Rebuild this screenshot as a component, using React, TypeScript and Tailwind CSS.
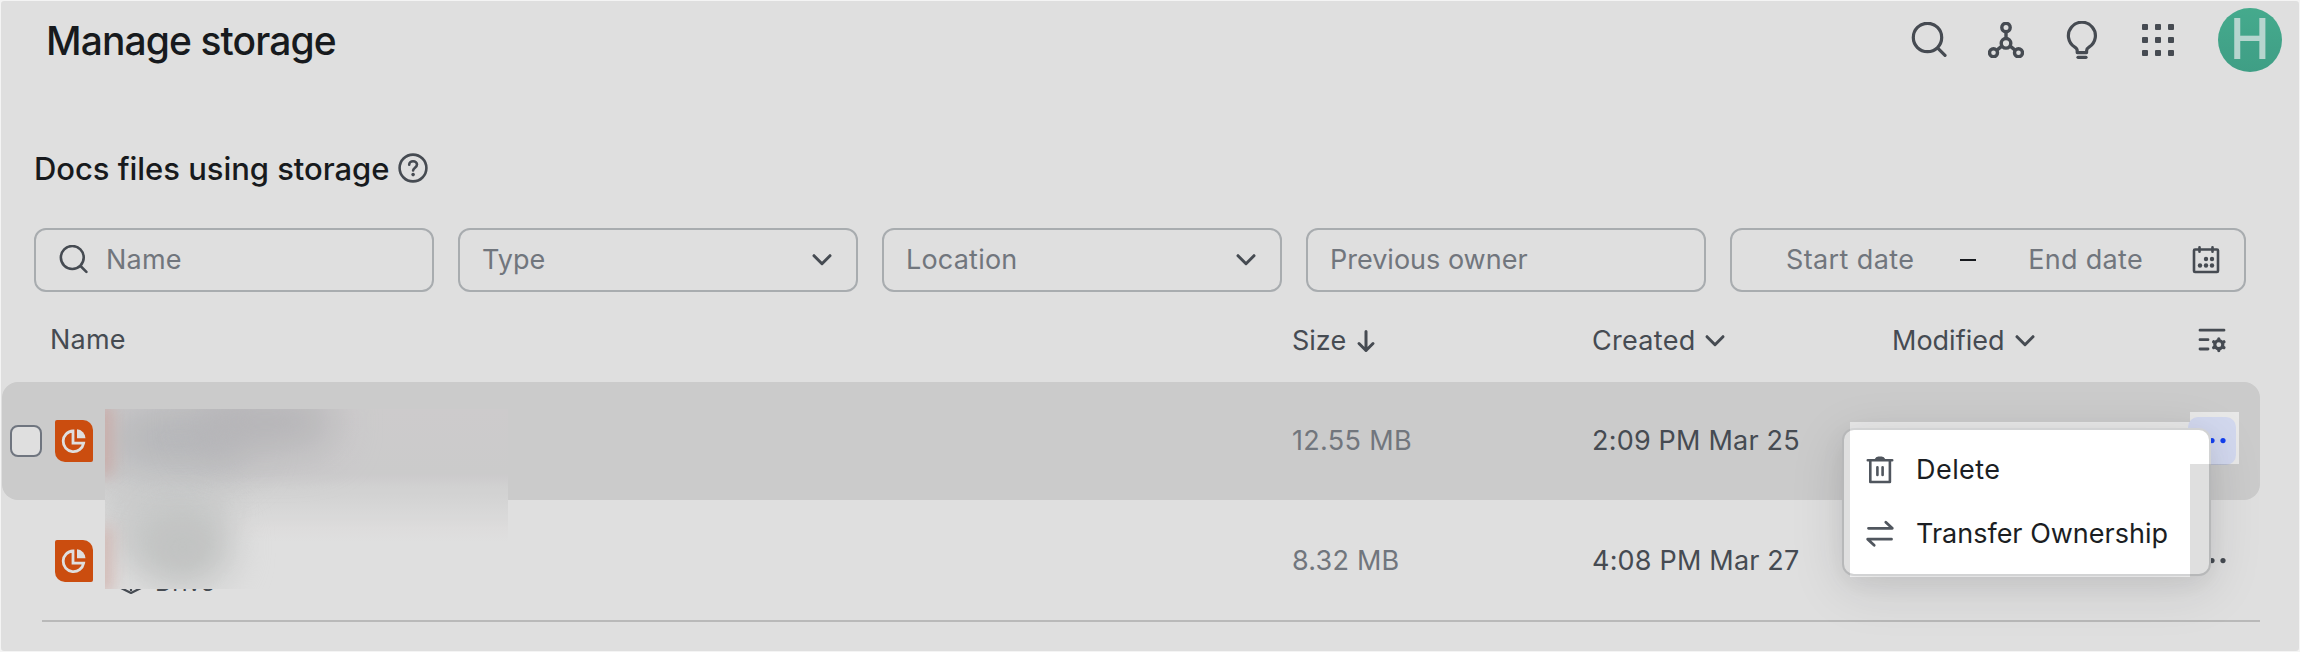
import type { ReactNode } from 'react';

type IconProps = { className?: string };

const SearchIcon = ({ className }: IconProps) => (
  <svg viewBox="0 0 36 36" className={className} fill="none" stroke="currentColor" strokeWidth="3.2" strokeLinecap="round">
    <circle cx="16.5" cy="15.5" r="14.2" />
    <path d="M27 26.4l7 7" />
  </svg>
);

const NetworkIcon = () => (
  <svg viewBox="0 0 36 36" className="size-9" fill="none" stroke="currentColor" strokeWidth="3.4">
    <circle cx="18" cy="5.5" r="4.2" />
    <circle cx="18" cy="21.3" r="4.8" />
    <circle cx="5.5" cy="30.7" r="4" />
    <circle cx="30.5" cy="30.7" r="4" />
    <path d="M18 10v6M13.8 24.2l-4.6 3.6M22.2 24.2l4.6 3.6" />
  </svg>
);

const BulbIcon = () => (
  <svg viewBox="0 0 36 38" className="h-[38px] w-9" fill="none" stroke="currentColor" strokeWidth="3.2" strokeLinecap="round" strokeLinejoin="round">
    <path d="M13.2 31.6v-1.8c0-1.6-.9-2.7-2.4-3.6a13.5 13.5 0 1 1 14.2 0c-1.5.9-2.4 2-2.4 3.6v1.8z" />
    <path d="M14 36.3h8" />
  </svg>
);

const AppsIcon = () => (
  <svg viewBox="0 0 36 36" className="size-9" fill="currentColor">
    {[2, 15, 28].map((y) => [2, 15, 28].map((x) => <rect key={`${x}-${y}`} x={x} y={y} width="6" height="6" rx="1" />))}
  </svg>
);

const HelpIcon = () => (
  <svg viewBox="0 0 30 30" className="size-[30px]" fill="none" stroke="currentColor" strokeWidth="2.6" strokeLinecap="round">
    <circle cx="15" cy="15" r="13.4" />
    <path d="M11.2 11.8c0-2.3 1.7-3.6 3.9-3.6s3.9 1.4 3.9 3.4c0 3-3.9 3.2-3.9 5.9" />
    <circle cx="15.1" cy="21.6" r="1.8" fill="currentColor" stroke="none" />
  </svg>
);

const ChevronIcon = () => (
  <svg viewBox="0 0 24 24" className="size-6 shrink-0" fill="none" stroke="currentColor" strokeWidth="3" strokeLinecap="round" strokeLinejoin="round">
    <path d="M4 7.7l8 8 8-8" />
  </svg>
);

const ArrowDownIcon = () => (
  <svg viewBox="0 0 24 24" className="size-6" fill="none" stroke="currentColor" strokeWidth="3" strokeLinecap="round" strokeLinejoin="round">
    <path d="M12 2.5v19M5 14.5l7 7 7-7" />
  </svg>
);

const CalendarIcon = () => (
  <svg viewBox="0 0 28 28" className="size-7" fill="none" stroke="currentColor" strokeWidth="2.6" strokeLinejoin="round">
    <rect x="2" y="3.5" width="24" height="22.5" rx="1" />
    <path d="M7.5 1.3v4.4M20.5 1.3v4.4" strokeLinecap="round" />
    <g fill="currentColor" stroke="none">
      <circle cx="14" cy="13" r="2.2" />
      <circle cx="20" cy="13" r="2.2" />
      <circle cx="8" cy="19.5" r="2.2" />
      <circle cx="14" cy="19.5" r="2.2" />
      <circle cx="20" cy="19.5" r="2.2" />
    </g>
  </svg>
);

const ColumnSettingsIcon = () => (
  <svg viewBox="0 0 28 28" className="size-7" fill="none" stroke="currentColor" strokeWidth="2.8" strokeLinecap="round">
    <path d="M2 3.2h24M2 12.7h8M2 22h8" />
    <circle cx="20.8" cy="17.7" r="4" strokeWidth="3.2" />
    <path d="M20.8 11.8v1M20.8 22.6v1M15.7 14.8l.8.5M25.1 20.1l.8.5M15.7 20.6l.8-.5M25.1 15.3l.8-.5" strokeWidth="3.2" />
  </svg>
);

const TrashIcon = () => (
  <svg viewBox="0 0 28 28" className="size-7" fill="none" stroke="currentColor" strokeWidth="2.6" strokeLinecap="round" strokeLinejoin="round">
    <path d="M1.8 4.2h24.4M4.3 4.2V26h19.6V4.2" />
    <path d="M9.5 3.4c.6-1.5 1.5-2.1 2.8-2.1h3.4c1.3 0 2.2.6 2.8 2.1z" fill="currentColor" strokeWidth="1.5" />
    <path d="M11.4 11.2V19M16.6 11.2V19" />
  </svg>
);

const TransferIcon = () => (
  <svg viewBox="0 0 28 28" className="size-7" fill="none" stroke="currentColor" strokeWidth="2.8" strokeLinecap="round" strokeLinejoin="round">
    <path d="M2.5 8.3h23.8l-6.5-6.1M25.5 19.2H1.7l6.5 6.1" />
  </svg>
);

const SlidesIcon = () => (
  <svg viewBox="0 0 38 42" className="h-[42px] w-[38px] rounded-[2px_10px_2px_10px] bg-[#e85812]">
    <path d="M18 11v12.2h10.6A10.3 10.3 0 1 1 18 11z" fill="none" stroke="white" strokeWidth="2.8" />
    <path d="M22 9.3a9.2 9.2 0 0 1 8.5 9H22z" fill="white" />
  </svg>
);

const DriveIcon = () => (
  <svg viewBox="0 0 24 24" className="size-6" fill="none" stroke="currentColor" strokeWidth="2.2" strokeLinejoin="round">
    <path d="M12 2l10 5.500v9.500l-10 5-10-5V7.500zM12 12v8M2 7.500l10 4.500 10-4.500" />
  </svg>
);

const Dots = () => (
  <svg viewBox="0 0 48 48" className="size-12" fill="currentColor">
    <circle cx="13" cy="23.6" r="2.6" />
    <circle cx="24" cy="23.6" r="2.6" />
    <circle cx="35" cy="23.6" r="2.6" />
  </svg>
);

const Field = ({ className = '', children }: { className?: string; children: ReactNode }) => (
  <div className={`flex h-16 items-center rounded-xl border-2 border-[#c1c5c9] text-[27px] text-[#82878f] ${className}`}>{children}</div>
);

const MoreButton = ({ active }: { active?: boolean }) => (
  <button className={`ml-auto rounded-[10px] ${active ? 'bg-[#d2d8ee] text-[#1440f0]' : 'text-[#50565e]'}`}>
    <Dots />
  </button>
);

const rowGrid = 'grid grid-cols-[1290px_300px_300px_1fr] items-center';

export default function App() {
  return (
    <div className="h-[652px] w-[2300px] bg-[#f4f4f4] p-px font-['Inter',sans-serif]">
      <div className="relative h-full overflow-hidden rounded-[3px] bg-white text-[#50565e]">
        {/* top bar */}
        <header className="flex h-[78px] items-center pl-[45px] pr-[17px]">
          <h1 className="text-[39px] font-medium leading-none tracking-[-0.9px] text-[#1b1e23]">Manage storage</h1>
          <div className="ml-auto flex items-center gap-10">
            <SearchIcon className="mr-px size-9" />
            <NetworkIcon />
            <BulbIcon />
            <AppsIcon />
            <div className="ml-[2px] flex size-16 items-center justify-center rounded-full bg-linear-to-b from-[#4fc3a1] to-[#49b599] pb-[3px]">
              <span className="scale-x-95 text-[56px] font-medium leading-none text-[#d0f4ec]">H</span>
            </div>
          </div>
        </header>

        <section className="mt-[74px] pl-[33px] pr-[53px]">
          <div className="flex h-8 items-center gap-[9px]">
            <h2 className="text-[31px] font-medium leading-8 tracking-[-0.04px] text-[#1b1e23]">Docs files using storage</h2>
            <span className="-mt-[2px]">
              <HelpIcon />
            </span>
          </div>

          {/* filters */}
          <div className="mt-[43px] flex gap-6">
            <Field className="w-[400px] gap-[18px] pl-[23px]">
              <SearchIcon className="-mt-px size-[29px] text-[#50565e]" />
              <span className="tracking-[0.2px]">Name</span>
            </Field>
            <Field className="w-[400px] justify-between px-[22px]">
              <span>Type</span>
              <span className="text-[#50565e]">
                <ChevronIcon />
              </span>
            </Field>
            <Field className="w-[400px] justify-between px-[22px]">
              <span className="tracking-[0.2px]">Location</span>
              <span className="text-[#50565e]">
                <ChevronIcon />
              </span>
            </Field>
            <Field className="w-[400px] px-[22px]">
              <span>Previous owner</span>
            </Field>
            <Field className="flex-1 pl-[54px] pr-6">
              <span className="tracking-[0.38px]">Start date</span>
              <span className="ml-[46px] h-[2px] w-4 bg-[#1b1e23]" />
              <span className="ml-[52px] tracking-[0.3px]">End date</span>
              <span className="ml-auto text-[#50565e]">
                <CalendarIcon />
              </span>
            </Field>
          </div>
        </section>

        <section className="relative ml-px mr-[39px] text-[27px]">
          <div className={`${rowGrid} h-[90px] pt-2`}>
            <div className="-mt-0.5 pl-12 tracking-[0.2px]">Name</div>
            <div className="flex items-center gap-2">
              Size <ArrowDownIcon />
            </div>
            <div className="flex items-center gap-[7px] tracking-[0.3px]">
              Created <ChevronIcon />
            </div>
            <div className="flex items-center gap-[9px] pr-5">
              Modified <ChevronIcon />
              <span className="ml-auto pr-[14px]">
                <ColumnSettingsIcon />
              </span>
            </div>
          </div>

          <div className={`${rowGrid} h-[118px] rounded-2xl bg-[#e8e8e8]`}>
            <div className="flex items-center pl-2">
              <span className="size-8 rounded-lg border-2 border-[#7f8692] bg-white" />
              <span className="ml-[13px]">
                <SlidesIcon />
              </span>
            </div>
            <div className="tracking-[0.33px] text-[#82878f]">12.55 MB</div>
            <div className="tracking-[0.2px]">2:09 PM Mar 25</div>
            <div className="flex pr-6">
              <MoreButton active />
            </div>
          </div>

          <div className={`${rowGrid} mt-0.5 h-[118px]`}>
            <div className="flex h-full items-center pl-[53px]">
              <SlidesIcon />
              <div className="mb-[22px] ml-[26px] flex h-[30px] items-center gap-3 self-end text-2xl">
                <DriveIcon />
                <span>Drive</span>
              </div>
            </div>
            <div className="tracking-[0.2px] text-[#82878f]">8.32 MB</div>
            <div className="tracking-[0.19px]">4:08 PM Mar 27</div>
            <div className="flex pr-6">
              <MoreButton />
            </div>
          </div>
          <div className="ml-10 h-[2px] bg-[#d4d4d4]" />

          {/* redacted file names */}
          <div className="absolute left-[103px] top-[117px] h-[180px] w-[403px] overflow-hidden bg-[linear-gradient(to_bottom,#ebe9ea_0%,#e9e8e9_36%,#efefef_43%,#f6f6f6_56%,#fdfcfc_66%,#ffffff_74%)]">
            <div className="absolute left-[0px] top-[50px] h-[110px] w-[120px] rounded-full bg-[#eaebeb] blur-[16px]" />
            <div className="absolute left-[5px] top-[-4px] h-[66px] w-[140px] rounded-full bg-[#d0d1d4] blur-[22px]" />
            <div className="absolute left-[90px] top-[-16px] h-[58px] w-[140px] rounded-full bg-[#cfced1] blur-[22px]" />
            <div className="absolute left-[30px] top-[100px] h-[76px] w-[95px] rounded-full bg-[#dcdedd] blur-[20px]" />
            <div className="absolute left-[-14px] top-[-4px] h-[70px] w-[22px] bg-[#e6c6c2] blur-[8px]" />
            <div className="absolute left-[-14px] top-[118px] h-[66px] w-[22px] bg-[#f1d5d0] blur-[8px]" />
          </div>
        </section>

        {/* row menu */}
        <div className="absolute left-[1841px] top-[427px] h-[148px] w-[369px] rounded-xl border-2 border-[#d2d3d4] bg-white py-2 text-[27px] text-[#1b1e23] shadow-[0_8px_24px_rgba(31,35,41,0.06),0_12px_54px_rgba(31,35,41,0.12)]">
          <div className="flex h-16 items-center gap-[22px] pl-[22px]">
            <span className="text-[#50565e]">
              <TrashIcon />
            </span>
            <span className="tracking-[0.45px]">Delete</span>
          </div>
          <div className="flex h-16 items-center gap-[22px] pl-[22px]">
            <span className="text-[#50565e]">
              <TransferIcon />
            </span>
            <span>Transfer Ownership</span>
          </div>
        </div>

        {/* spotlight mask with a cut-out around the menu and its trigger */}
        <div className="pointer-events-none absolute inset-0 bg-black/[0.125] [clip-path:polygon(evenodd,0_0,2298px_0,2298px_650px,0_650px,0_0,1849px_421px,2189px_421px,2189px_411px,2238px_411px,2238px_463px,2189px_463px,2189px_576px,1849px_576px,1849px_421px,0_0)]" />
      </div>
    </div>
  );
}
